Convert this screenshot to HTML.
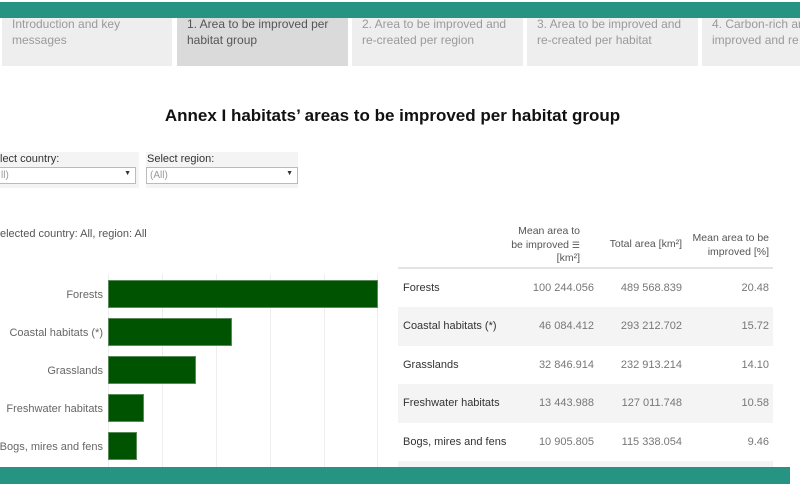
<!DOCTYPE html>
<html><head><meta charset="utf-8"><style>
*{margin:0;padding:0;box-sizing:border-box}
body{width:800px;height:486px;background:#fff;font-family:"Liberation Sans",sans-serif;position:relative;overflow:hidden}
.a{position:absolute}
.tab{position:absolute;top:18px;height:48px;background:#eeeeee;color:#9a9a9a;font-size:12px;line-height:16px;padding:0 0 0 10px;overflow:hidden;white-space:nowrap;margin-top:0}
.tab div{margin-top:-2px}
.bar{position:absolute;left:108px;height:28px;background:#005300;border:1px solid #5a8a5a}
.lab{position:absolute;right:697px;font-size:11px;color:#666;text-align:right;white-space:nowrap}
.grid{position:absolute;top:274px;width:1px;height:193px;background:#eeeeee}
.row{position:absolute;left:398px;width:375px;height:39px;font-size:11px;color:#333}
.row span{position:absolute;top:13px}
.n{color:#777;text-align:right}
</style></head><body>
<div class="a" style="left:0;top:2px;width:800px;height:16px;background:#279382"></div>
<div class="tab" style="left:2px;width:170px"><div>Introduction and key<br>messages</div></div>
<div class="tab" style="left:177px;width:171px;background:#dadada;color:#555"><div>1. Area to be improved per<br>habitat group</div></div>
<div class="tab" style="left:352px;width:171px"><div>2. Area to be improved and<br>re-created per region</div></div>
<div class="tab" style="left:527px;width:171px"><div>3. Area to be improved and<br>re-created per habitat</div></div>
<div class="tab" style="left:702px;width:98px"><div>4. Carbon-rich areas<br>improved and re</div></div>
<div class="a" style="left:0;top:106px;width:785px;text-align:center;font-size:17px;font-weight:bold;color:#111">Annex I habitats’ areas to be improved per habitat group</div>
<div class="a" style="left:0;top:152px;width:139px;height:36px;background:#f4f4f4"></div>
<div class="a" style="left:146px;top:152px;width:152px;height:36px;background:#f4f4f4"></div>
<div class="a" style="left:0;top:153px;font-size:11px;color:#333">lect country:</div>
<div class="a" style="left:147px;top:153px;font-size:11px;color:#333">Select region:</div>
<div class="a" style="left:-2px;top:167px;width:138px;height:17px;background:#fff;border:1px solid #bbb;font-size:10px;color:#999;padding:2px 0 0 2px">ll)<span style="position:absolute;right:4px;top:2px;font-size:7px;color:#333">▼</span></div>
<div class="a" style="left:146px;top:167px;width:152px;height:17px;background:#fff;border:1px solid #bbb;font-size:10px;color:#999;padding:2px 0 0 3px">(All)<span style="position:absolute;right:4px;top:2px;font-size:7px;color:#333">▼</span></div>
<div class="a" style="left:0;top:228px;font-size:11px;color:#555">elected country: All, region: All</div>
<div class="grid" style="left:108px"></div><div class="grid" style="left:162px"></div><div class="grid" style="left:216px"></div><div class="grid" style="left:270px"></div><div class="grid" style="left:324px"></div><div class="grid" style="left:377px"></div>
<div class="bar" style="top:280px;width:270px"></div>
<div class="bar" style="top:318px;width:124px"></div>
<div class="bar" style="top:356px;width:88px"></div>
<div class="bar" style="top:394px;width:36px"></div>
<div class="bar" style="top:432px;width:29px"></div>
<div class="lab" style="top:289px">Forests</div>
<div class="lab" style="top:327px">Coastal habitats (*)</div>
<div class="lab" style="top:365px">Grasslands</div>
<div class="lab" style="top:403px">Freshwater habitats</div>
<div class="lab" style="top:441px">Bogs, mires and fens</div>
<div class="a" style="left:490px;top:225px;width:90px;text-align:right;font-size:10.5px;color:#555;line-height:13.5px">Mean area to<br>be improved <span style="font-size:9px">☰</span><br>[km²]</div>
<div class="a" style="left:595px;top:238px;width:87px;text-align:right;font-size:10.5px;color:#555">Total area [km²]</div>
<div class="a" style="left:680px;top:231px;width:89px;text-align:right;font-size:10.5px;color:#555;line-height:14px">Mean area to be<br>improved [%]</div>
<div class="a" style="left:398px;top:267px;width:375px;height:2px;background:#e4e4e4"></div>
<div class="row" style="top:269px"><span style="left:5px">Forests</span><span class="n" style="right:179px">100 244.056</span><span class="n" style="right:91px">489 568.839</span><span class="n" style="right:4px">20.48</span></div>
<div class="row" style="top:307px;background:#f4f4f4"><span style="left:5px">Coastal habitats (*)</span><span class="n" style="right:179px">46 084.412</span><span class="n" style="right:91px">293 212.702</span><span class="n" style="right:4px">15.72</span></div>
<div class="row" style="top:346px"><span style="left:5px">Grasslands</span><span class="n" style="right:179px">32 846.914</span><span class="n" style="right:91px">232 913.214</span><span class="n" style="right:4px">14.10</span></div>
<div class="row" style="top:384px;background:#f4f4f4"><span style="left:5px">Freshwater habitats</span><span class="n" style="right:179px">13 443.988</span><span class="n" style="right:91px">127 011.748</span><span class="n" style="right:4px">10.58</span></div>
<div class="row" style="top:423px"><span style="left:5px">Bogs, mires and fens</span><span class="n" style="right:179px">10 905.805</span><span class="n" style="right:91px">115 338.054</span><span class="n" style="right:4px">9.46</span></div>
<div class="a" style="left:398px;top:461px;width:375px;height:6px;background:#f4f4f4"></div>
<div class="a" style="left:0;top:467px;width:790px;height:17px;background:#279382"></div>
</body></html>
